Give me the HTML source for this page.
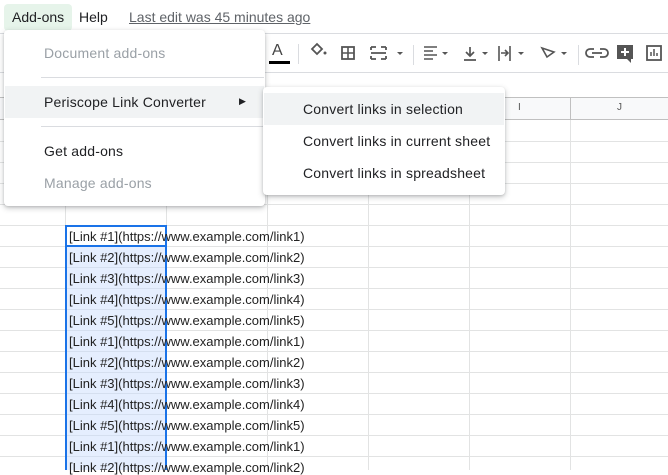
<!DOCTYPE html>
<html><head><style>
*{margin:0;padding:0;box-sizing:border-box}
body{width:668px;height:470px;overflow:hidden;background:#fff;font-family:"Liberation Sans",Arial,sans-serif;position:relative;color:#202124}
.abs{position:absolute}
.hl{position:absolute;left:0;width:668px;height:1px;background:#e2e3e3}
.vl{position:absolute;width:1px;background:#e2e3e3}
.cell{position:absolute;left:69px;font-size:13px;color:#222;white-space:nowrap}
.mi{position:absolute;font-size:14px;letter-spacing:0.2px}
</style></head><body>
<div class="abs" style="left:4px;top:4px;width:68px;height:27px;background:#e6f4ea;border-radius:4px"></div>
<div class="abs" style="left:12px;top:9px;font-size:14px">Add-ons</div>
<div class="abs" style="left:79px;top:9px;font-size:14px">Help</div>
<div class="abs" style="left:129px;top:9px;font-size:14px;color:#5f6368;text-decoration:underline">Last edit was 45 minutes ago</div>
<div class="hl" style="top:33px;background:#dadce0"></div>
<div class="hl" style="top:72px;background:#dadce0"></div>
<!-- toolbar -->
<div class="abs" style="left:272px;top:42px;font-size:16px;color:#444">A</div>
<div class="abs" style="left:269px;top:61px;width:21px;height:3px;background:#000"></div>
<div class="abs" style="left:298px;top:44px;width:1px;height:20px;background:#dadce0"></div>
<svg class="abs" style="left:0;top:40px" width="668" height="26" viewBox="0 0 668 26" fill="#555">
<path d="M312 9l5-5 5 5-5 5z" fill="none" stroke="#555" stroke-width="1.8"/><circle cx="325" cy="13" r="1.5"/>
<rect x="342" y="7" width="12" height="12" fill="none" stroke="#555" stroke-width="1.8"/><path d="M348 7v12M342 13h12" stroke="#555" stroke-width="1.6"/>
<path d="M371 7h5M381 7h5M371 19h5M381 19h5M371 13h15M371 7v3M386 7v3M371 19v-3M386 19v-3" stroke="#555" stroke-width="1.8"/><path d="M397 12l3 3 3-3z"/>
<rect x="413" y="5" width="1" height="20" fill="#dadce0"/>
<path d="M424 7h13M424 11h9M424 15h13M424 19h9" stroke="#555" stroke-width="1.6"/><path d="M442 12l3 3 3-3z"/>
<path d="M470 7v9M466 12l4 4 4-4M464 20h12" stroke="#555" stroke-width="1.7" fill="none"/><path d="M482 12l3 3 3-3z"/>
<path d="M499 6v15M510 6v15M501 13h6M505 10l3 3-3 3" stroke="#555" stroke-width="1.6" fill="none"/><path d="M518 12l3 3 3-3z"/>
<path d="M542 8l12 4-7 5z" fill="none" stroke="#555" stroke-width="1.6"/><path d="M561 12l3 3 3-3z"/>
<rect x="578" y="5" width="1" height="20" fill="#dadce0"/>
<path d="M594 9h-4a4 4 0 0 0 0 8h4M600 9h4a4 4 0 0 1 0 8h-4M592 13h10" stroke="#555" stroke-width="1.8" fill="none"/>
<path d="M617 5h16v14h-2v4l-4-4h-10z"/><path d="M625 8v8M621 12h8" stroke="#fff" stroke-width="2"/>
<rect x="647" y="6" width="14" height="14" fill="none" stroke="#555" stroke-width="1.8"/><path d="M651 16v-4M654 16v-7M657 16v-3" stroke="#555" stroke-width="1.5"/>
</svg>
<!-- header row -->
<div class="abs" style="left:0;top:97px;width:668px;height:23px;background:#f8f9fa;border-top:1px solid #c0c0c0;border-bottom:1px solid #c0c0c0"></div>
<div class="abs" style="left:518px;top:102px;font-size:10px;color:#555">I</div>
<div class="abs" style="left:617px;top:102px;font-size:10px;color:#555">J</div>
<div class="vl" style="left:65px;top:97px;height:373px"></div>
<div class="vl" style="left:166px;top:97px;height:373px"></div>
<div class="vl" style="left:267px;top:97px;height:373px"></div>
<div class="vl" style="left:368px;top:97px;height:373px"></div>
<div class="vl" style="left:469px;top:97px;height:373px;background:#c0c0c0"></div>
<div class="vl" style="left:570px;top:97px;height:373px;background:#c0c0c0"></div>
<div class="vl" style="left:469px;top:120px;height:350px"></div>
<div class="vl" style="left:570px;top:120px;height:350px"></div>
<div class="hl" style="top:141px"></div><div class="hl" style="top:162px"></div><div class="hl" style="top:183px"></div><div class="hl" style="top:204px"></div><div class="hl" style="top:225px"></div><div class="hl" style="top:246px"></div><div class="hl" style="top:267px"></div><div class="hl" style="top:288px"></div><div class="hl" style="top:309px"></div><div class="hl" style="top:330px"></div><div class="hl" style="top:351px"></div><div class="hl" style="top:372px"></div><div class="hl" style="top:393px"></div><div class="hl" style="top:414px"></div><div class="hl" style="top:435px"></div><div class="hl" style="top:456px"></div>
<div class="abs" style="left:65px;top:225px;width:102px;height:245px;background:rgba(198,218,252,0.45);border:2px solid #1a73e8;border-bottom:none"></div>
<div class="abs" style="left:65px;top:225px;width:102px;height:22px;background:#fff;border:2px solid #1a73e8"></div>
<div class="cell" style="top:229px">[Link #1](https://www.example.com/link1)</div>
<div class="cell" style="top:250px">[Link #2](https://www.example.com/link2)</div>
<div class="cell" style="top:271px">[Link #3](https://www.example.com/link3)</div>
<div class="cell" style="top:292px">[Link #4](https://www.example.com/link4)</div>
<div class="cell" style="top:313px">[Link #5](https://www.example.com/link5)</div>
<div class="cell" style="top:334px">[Link #1](https://www.example.com/link1)</div>
<div class="cell" style="top:355px">[Link #2](https://www.example.com/link2)</div>
<div class="cell" style="top:376px">[Link #3](https://www.example.com/link3)</div>
<div class="cell" style="top:397px">[Link #4](https://www.example.com/link4)</div>
<div class="cell" style="top:418px">[Link #5](https://www.example.com/link5)</div>
<div class="cell" style="top:439px">[Link #1](https://www.example.com/link1)</div>
<div class="cell" style="top:460px">[Link #2](https://www.example.com/link2)</div>
<!-- menu -->
<div class="abs" style="left:4px;top:30px;width:261px;height:176px;background:#fff;border-radius:4px;box-shadow:0 2px 6px rgba(60,64,67,.3),0 1px 2px rgba(60,64,67,.15)"></div>
<div class="mi" style="left:44px;top:45px;color:#9aa0a6">Document add-ons</div>
<div class="abs" style="left:41px;top:77px;width:223px;height:1px;background:#dadce0"></div>
<div class="abs" style="left:5px;top:86px;width:259px;height:32px;background:#f1f3f4"></div>
<div class="mi" style="left:44px;top:94px">Periscope Link Converter</div>
<div class="abs" style="left:239px;top:96px;font-size:9px">&#9654;</div>
<div class="abs" style="left:41px;top:126px;width:223px;height:1px;background:#dadce0"></div>
<div class="mi" style="left:44px;top:143px">Get add-ons</div>
<div class="mi" style="left:44px;top:175px;color:#9aa0a6">Manage add-ons</div>
<!-- submenu -->
<div class="abs" style="left:263px;top:87px;width:242px;height:108px;background:#fff;border-radius:4px;box-shadow:0 2px 6px rgba(60,64,67,.3),0 1px 2px rgba(60,64,67,.15)"></div>
<div class="abs" style="left:264px;top:93px;width:240px;height:32px;background:#f1f3f4"></div>
<div class="mi" style="left:303px;top:101px">Convert links in selection</div>
<div class="mi" style="left:303px;top:133px">Convert links in current sheet</div>
<div class="mi" style="left:303px;top:165px">Convert links in spreadsheet</div>
</body></html>
